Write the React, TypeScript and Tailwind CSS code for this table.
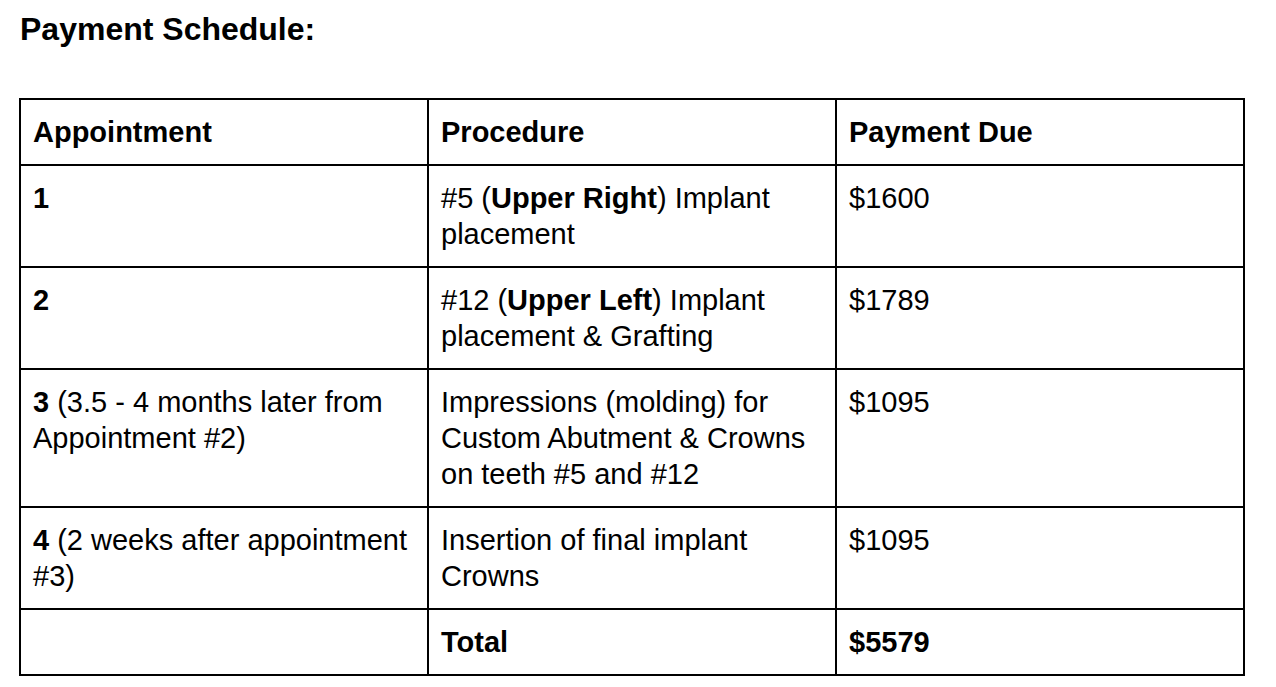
import React from "react";

const cell =
  "border-2 border-black align-top px-[12px] py-[14px] text-left font-normal";

export default function App() {
  return (
    <div
      className="min-h-[687px] w-[1276px] bg-white text-black"
      style={{ fontFamily: '"Liberation Sans", Arial, sans-serif' }}
    >
      <div className="pl-[20px] pt-[13px] text-[32px] font-bold leading-[32px]">
        Payment Schedule:
      </div>
      <table className="ml-[19px] mt-[53px] w-[1224px] table-fixed border-collapse text-[29px] leading-[36px]">
        <colgroup>
          <col className="w-[408px]" />
          <col className="w-[408px]" />
          <col className="w-[408px]" />
        </colgroup>
        <thead>
          <tr>
            <th className={cell}>
              <b>Appointment</b>
            </th>
            <th className={cell}>
              <b>Procedure</b>
            </th>
            <th className={cell}>
              <b>Payment Due</b>
            </th>
          </tr>
        </thead>
        <tbody>
          <tr>
            <td className={cell}>
              <b>1</b>
            </td>
            <td className={cell}>
              #5 (<b>Upper Right</b>) Implant placement
            </td>
            <td className={cell}>$1600</td>
          </tr>
          <tr>
            <td className={cell}>
              <b>2</b>
            </td>
            <td className={cell}>
              #12 (<b>Upper Left</b>) Implant placement &amp; Grafting
            </td>
            <td className={cell}>$1789</td>
          </tr>
          <tr>
            <td className={cell}>
              <b>3</b> (3.5 - 4 months later from Appointment #2)
            </td>
            <td className={cell}>
              Impressions (molding) for Custom Abutment &amp; Crowns on teeth #5
              and #12
            </td>
            <td className={cell}>$1095</td>
          </tr>
          <tr>
            <td className={cell}>
              <b>4</b> (2 weeks after appointment #3)
            </td>
            <td className={cell}>Insertion of final implant Crowns</td>
            <td className={cell}>$1095</td>
          </tr>
          <tr>
            <td className={cell}></td>
            <td className={cell}>
              <b>Total</b>
            </td>
            <td className={cell}>
              <b>$5579</b>
            </td>
          </tr>
        </tbody>
      </table>
    </div>
  );
}
